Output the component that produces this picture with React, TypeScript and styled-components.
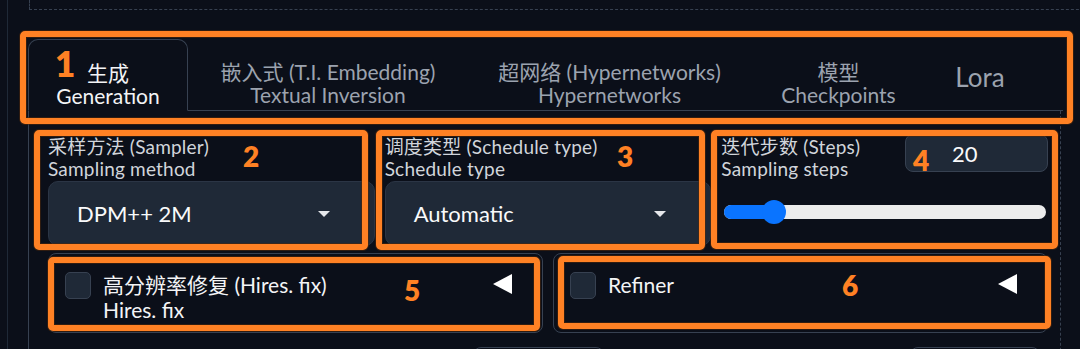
import React from "react";
import styled, { createGlobalStyle, css } from "styled-components";

const GlobalStyle = createGlobalStyle`
  html, body {
    margin: 0;
    padding: 0;
    background: #0b0f19;
  }
  body {
    font-family: Lato, "Noto Sans CJK SC", sans-serif;
    color: #d1d5db;
  }
  * {
    box-sizing: border-box;
  }
`;

const Page = styled.div`
  position: relative;
  width: 1080px;
  height: 349px;
  overflow: hidden;
  background: #0b0f19;
`;

const Shell = styled.div`
  margin-left: 7px;
  height: 100%;
  border-left: 1px solid #1f2937;
  padding-left: 20px;
`;

const TopStrip = styled.div`
  margin-left: 1px;
  width: 1100px;
  height: 10px;
  border: 1px dashed #374151;
  border-top: none;
`;

const TabNav = styled.div`
  display: flex;
  margin-top: 29px;
  width: 1035px;
  height: 72px;
`;

const Tab = styled.div<{ $w: number; $active?: boolean }>`
  flex: none;
  width: ${(p) => p.$w}px;
  display: flex;
  flex-direction: column;
  align-items: center;
  padding-top: 21px;
  border-bottom: 1px solid #374151;
  color: #9ca3af;
  ${(p) =>
    p.$active &&
    css`
      border: 1px solid #374151;
      border-bottom-color: transparent;
      border-radius: 10px 10px 0 0;
      color: #f3f4f6;
    `}
`;

const TabFill = styled.div`
  flex: 1;
  border-bottom: 1px solid #374151;
`;

const TabLine = styled.span<{ $size?: number; $lh?: number }>`
  display: block;
  font-size: ${(p) => p.$size || 21}px;
  line-height: ${(p) => p.$lh || 23}px;
  white-space: nowrap;
`;

const TabBody = styled.div`
  width: 1033px;
  height: 260px;
  border-left: 1px solid #374151;
  border-right: 1px dashed #374151;
  padding: 17px 12px 0 19px;
`;

const Grid3 = styled.div`
  display: grid;
  grid-template-columns: repeat(3, 1fr);
  column-gap: 10px;
`;

const Field = styled.div`
  display: flex;
  flex-direction: column;
`;

const FieldHead = styled.div`
  display: flex;
  justify-content: space-between;
  align-items: flex-start;
`;

const Label = styled.div`
  padding-top: 8px;
  font-size: 19px;
  line-height: 22px;
  letter-spacing: 0.2px;
  color: #d1d5db;
  white-space: nowrap;
`;

const Dropdown = styled.div`
  margin-top: 1px;
  height: 65px;
  background: #1f2937;
  border: 1px solid #2b3545;
  border-radius: 10px;
  display: flex;
  align-items: center;
  justify-content: space-between;
  padding: 0 44px 0 28px;
  font-size: 22px;
  color: #f9fafb;
`;

const Caret = styled.span`
  width: 0;
  height: 0;
  border-left: 6px solid transparent;
  border-right: 6px solid transparent;
  border-top: 6px solid #e5e7eb;
`;

const NumberBox = styled.div`
  margin-top: 6px;
  width: 143px;
  height: 38px;
  background: #1f2937;
  border: 1px solid #374151;
  border-radius: 8px;
  padding-left: 46px;
  display: flex;
  align-items: center;
  font-size: 22px;
  color: #f9fafb;
`;

const SliderWrap = styled.div`
  position: relative;
  margin: 20px 2px 0 3px;
  padding: 5px 0;
`;

const Track = styled.div`
  height: 14px;
  border-radius: 7px;
  background: #ececec;
  overflow: hidden;
`;

const Fill = styled.div`
  height: 100%;
  background: #0a74ff;
`;

const Thumb = styled.div`
  position: absolute;
  top: 0;
  width: 24px;
  height: 24px;
  margin-left: -12px;
  border-radius: 50%;
  background: #0a74ff;
`;

const Grid2 = styled.div`
  margin-top: 7px;
  display: grid;
  grid-template-columns: 1fr 1fr;
  column-gap: 10px;
`;

const Panel = styled.div`
  height: 80px;
  border: 1px solid #374151;
  border-radius: 8px;
  padding: 18px 30px 0 16px;
  display: flex;
  align-items: flex-start;
  gap: 12px;
`;

const Check = styled.div`
  flex: none;
  width: 26px;
  height: 27px;
  background: #1f2937;
  border: 1px solid #374151;
  border-radius: 5px;
`;

const PanelText = styled.div`
  flex: 1;
  font-size: 21px;
  line-height: 25px;
  color: #f3f4f6;
  white-space: nowrap;
`;

const Collapse = styled.span`
  flex: none;
  margin-top: 2px;
  width: 0;
  height: 0;
  border-top: 10px solid transparent;
  border-bottom: 10px solid transparent;
  border-right: 19px solid #ffffff;
`;

const StubRow = styled.div`
  margin-top: 14px;
  display: flex;
`;

const Stub = styled.div<{ $ml: number; $w: number }>`
  margin-left: ${(p) => p.$ml}px;
  width: ${(p) => p.$w}px;
  height: 40px;
  border: 1px solid #374151;
  border-radius: 8px;
`;

const Mark = styled.div<{ $x: number; $y: number; $w: number; $h: number }>`
  position: absolute;
  left: ${(p) => p.$x}px;
  top: ${(p) => p.$y}px;
  width: ${(p) => p.$w}px;
  height: ${(p) => p.$h}px;
  border: 6px solid #ff8124;
  border-radius: 5px;
  box-shadow: 0 0 0 1px rgba(80, 40, 10, 0.55), inset 0 0 0 1px rgba(80, 40, 10, 0.55);
  pointer-events: none;
`;

const Num = styled.span<{ $x: number; $y: number; $size: number }>`
  position: absolute;
  left: ${(p) => p.$x}px;
  top: ${(p) => p.$y}px;
  font-size: ${(p) => p.$size}px;
  line-height: 1;
  font-weight: 800;
  color: #ff8124;
`;

const tabs = [
  { w: 160, top: "生成", bottom: "Generation", active: true },
  { w: 280, top: "嵌入式 (T.I. Embedding)", bottom: "Textual Inversion" },
  { w: 283, top: "超网络 (Hypernetworks)", bottom: "Hypernetworks" },
  { w: 175, top: "模型", bottom: "Checkpoints" },
];

const marks = [
  { n: "1", x: 20, y: 31, w: 1053, h: 93, nx: 55, ny: 46, size: 35 },
  { n: "2", x: 34, y: 130, w: 334, h: 120, nx: 243, ny: 142, size: 28 },
  { n: "3", x: 376, y: 130, w: 329, h: 120, nx: 617, ny: 142, size: 28 },
  { n: "4", x: 711, y: 130, w: 347, h: 119, nx: 913, ny: 146, size: 28 },
  { n: "5", x: 48, y: 257, w: 492, h: 74, nx: 404, ny: 276, size: 28 },
  { n: "6", x: 558, y: 256, w: 493, h: 73, nx: 842, ny: 271, size: 28 },
];

const steps = { value: 20, min: 1, max: 150 };

export default function App() {
  const pct = (steps.value - steps.min) / (steps.max - steps.min);
  const thumbLeft = `calc(12px + (100% - 24px) * ${pct})`;

  return (
    <>
      <GlobalStyle />
      <Page>
        <Shell>
          <TopStrip />
          <TabNav>
            {tabs.map((t) => (
              <Tab key={t.bottom} $w={t.w} $active={t.active}>
                <TabLine>{t.top}</TabLine>
                <TabLine>{t.bottom}</TabLine>
              </Tab>
            ))}
            <Tab $w={108}>
              <TabLine $size={26} $lh={34}>
                Lora
              </TabLine>
            </Tab>
            <TabFill />
          </TabNav>

          <TabBody>
            <Grid3>
              <Field>
                <Label>
                  采样方法 (Sampler)
                  <br />
                  Sampling method
                </Label>
                <Dropdown>
                  <span>DPM++ 2M</span>
                  <Caret />
                </Dropdown>
              </Field>
              <Field>
                <Label>
                  调度类型 (Schedule type)
                  <br />
                  Schedule type
                </Label>
                <Dropdown>
                  <span>Automatic</span>
                  <Caret />
                </Dropdown>
              </Field>
              <Field>
                <FieldHead>
                  <Label>
                    迭代步数 (Steps)
                    <br />
                    Sampling steps
                  </Label>
                  <NumberBox>{steps.value}</NumberBox>
                </FieldHead>
                <SliderWrap>
                  <Track>
                    <Fill style={{ width: thumbLeft }} />
                  </Track>
                  <Thumb style={{ left: thumbLeft }} />
                </SliderWrap>
              </Field>
            </Grid3>

            <Grid2>
              <Panel>
                <Check />
                <PanelText>
                  高分辨率修复 (Hires. fix)
                  <br />
                  Hires. fix
                </PanelText>
                <Collapse />
              </Panel>
              <Panel>
                <Check />
                <PanelText>Refiner</PanelText>
                <Collapse />
              </Panel>
            </Grid2>

            <StubRow>
              <Stub $ml={425} $w={131} />
              <Stub $ml={306} $w={130} />
            </StubRow>
          </TabBody>
        </Shell>

        {marks.map((m) => (
          <React.Fragment key={m.n}>
            <Mark $x={m.x} $y={m.y} $w={m.w} $h={m.h} />
            <Num $x={m.nx} $y={m.ny} $size={m.size}>
              {m.n}
            </Num>
          </React.Fragment>
        ))}
      </Page>
    </>
  );
}
